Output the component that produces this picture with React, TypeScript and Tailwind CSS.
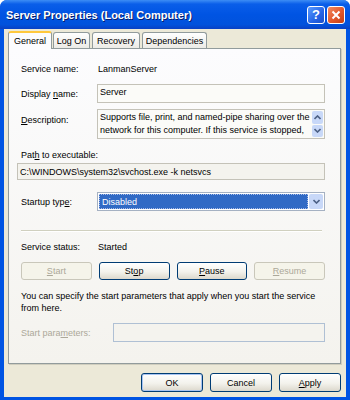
import type { ReactNode } from "react";

const U = ({ children }: { children: ReactNode }) => (
  <span className="underline underline-offset-[1px]">{children}</span>
);

function XPButton({
  children,
  disabled,
  className = "",
}: {
  children: ReactNode;
  disabled?: boolean;
  className?: string;
}) {
  return (
    <div
      className={`flex h-[18px] items-center justify-center rounded-[3px] border ${
        disabled
          ? "border-[#C9C7BA] bg-[#F5F4EA] text-[#ACA899]"
          : "border-[#003C74] bg-[linear-gradient(to_bottom,#FFFFFF,#F3F2EC_55%,#DCD8CC)] text-black"
      } ${className}`}
    >
      {children}
    </div>
  );
}

function Chevron({ up }: { up?: boolean }) {
  return (
    <svg width="7" height="5" viewBox="0 0 7 5">
      <path
        d={up ? "M0.5 4 L3.5 1 L6.5 4" : "M0.5 1 L3.5 4 L6.5 1"}
        fill="none"
        stroke="#4D6185"
        strokeWidth="1.6"
      />
    </svg>
  );
}

export default function App() {
  return (
    <div className="flex h-[400px] w-[350px] flex-col rounded-t-[7px] bg-[#0054E3] font-['Liberation_Sans',Arial,sans-serif] text-[9px] leading-[12px] text-black">
      {/* Title bar */}
      <div className="flex h-[29px] items-center rounded-t-[7px] bg-[linear-gradient(180deg,#3D8DF5_0%,#0A5EE9_14%,#0054E3_50%,#0152DC_85%,#0940C4_100%)] pl-[6px] pr-[5px]">
        <span className="flex-1 text-[11px] font-bold text-white [text-shadow:1px_1px_0_#0A1E6A]">
          Server Properties (Local Computer)
        </span>
        <div className="mr-[2px] flex h-[18px] w-[18px] items-center justify-center rounded-[3px] border border-white bg-[linear-gradient(135deg,#5A9BFF,#2463E6_60%,#1A4FC8)] text-[13px] font-bold text-white">
          ?
        </div>
        <div className="flex h-[18px] w-[18px] items-center justify-center rounded-[3px] border border-white bg-[linear-gradient(135deg,#F28C62,#E2572B_55%,#C23E14)]">
          <svg width="10" height="10" viewBox="0 0 10 10">
            <path d="M1.5 1.5 L8.5 8.5 M8.5 1.5 L1.5 8.5" stroke="white" strokeWidth="2" />
          </svg>
        </div>
      </div>

      {/* Body */}
      <div className="mb-[3px] ml-[4px] mr-[4px] flex flex-1 flex-col bg-[#ECE9D8] pl-[4px] pr-[5px]">
        {/* Tabs */}
        <div className="flex h-[19px] items-end">
          <div className="relative z-10 -mb-px flex h-[18px] w-[44px] items-start justify-center rounded-t-[3px] border-x border-t-[2px] border-x-[#919B9C] border-t-[#FFC83C] bg-[#FCFCFE] pt-[2px]">
            General
          </div>
          <div className="ml-[1px] flex h-[16px] w-[37px] items-center justify-center rounded-t-[3px] border-x border-t border-[#919B9C] bg-[linear-gradient(to_bottom,#FFFFFF,#ECEBE6)]">
            Log On
          </div>
          <div className="ml-[2px] flex h-[16px] w-[48px] items-center justify-center rounded-t-[3px] border-x border-t border-[#919B9C] bg-[linear-gradient(to_bottom,#FFFFFF,#ECEBE6)]">
            Recovery
          </div>
          <div className="ml-[2px] flex h-[16px] w-[65px] items-center justify-center rounded-t-[3px] border-x border-t border-[#919B9C] bg-[linear-gradient(to_bottom,#FFFFFF,#ECEBE6)]">
            Dependencies
          </div>
        </div>

        {/* Panel */}
        <div className="flex h-[316px] flex-col border border-[#919B9C] bg-[linear-gradient(to_bottom,#FCFCFE,#F4F3EE)] pl-[12px] pr-[15px] shadow-[1px_1px_0_#D0CEBF]">
          <div className="mt-[13px] flex h-[13px] items-center">
            <span className="w-[77px]">Service name:</span>
            <span>LanmanServer</span>
          </div>

          <div className="mt-[9px] flex items-center">
            <span className="w-[76px]">
              Display <U>n</U>ame:
            </span>
            <div className="h-[19px] flex-1 border border-[#C4C2B8] bg-[#FBFBF8] px-[2px] pt-[1px]">
              Server
            </div>
          </div>

          <div className="mt-[6px] flex items-start">
            <span className="w-[76px] pt-[5px]">
              <U>D</U>escription:
            </span>
            <div className="flex h-[30px] flex-1 border border-[#C4C2B8] bg-[#FBFBF8]">
              <div className="flex-1 overflow-hidden pl-[2px] pt-[1px] leading-[13px]">
                Supports file, print, and named-pipe sharing over the network for this computer. If this service is stopped,
              </div>
              <div className="flex w-[13px] flex-col gap-[1px] p-px">
                <div className="flex flex-1 items-center justify-center rounded-[2px] bg-[#C8D8F8]">
                  <Chevron up />
                </div>
                <div className="flex flex-1 items-center justify-center rounded-[2px] bg-[#C8D8F8]">
                  <Chevron />
                </div>
              </div>
            </div>
          </div>

          <div className="mt-[10px] h-[13px]">
            Pat<U>h</U> to executable:
          </div>
          <div className="-ml-[4px] mt-[1px] flex h-[17px] items-center border border-[#C4C2B8] bg-[#F4F3EE] px-[2px]">
            C:\WINDOWS\system32\svchost.exe -k netsvcs
          </div>

          <div className="mt-[12px] flex items-center">
            <span className="w-[76px]">
              Startup typ<U>e</U>:
            </span>
            <div className="flex h-[19px] flex-1 items-center border border-[#A5B1C2] bg-white p-px">
              <div className="flex h-full flex-1 items-center border border-dotted border-[#A8BCE8] bg-[#316AC5] pl-[2px] text-white">
                Disabled
              </div>
              <div className="ml-px flex h-full w-[14px] items-center justify-center rounded-[2px] bg-[#C8D8F8]">
                <Chevron />
              </div>
            </div>
          </div>

          <div className="mt-[19px] mr-[3px] border-t border-b border-t-[#D0D0BF] border-b-white" />

          <div className="mt-[8px] flex h-[13px] items-center">
            <span className="w-[77px]">Service status:</span>
            <span>Started</span>
          </div>

          <div className="mt-[9px] grid grid-cols-4 gap-[7px]">
            <XPButton disabled>
              <U>S</U>tart
            </XPButton>
            <XPButton>
              St<U>o</U>p
            </XPButton>
            <XPButton>
              <U>P</U>ause
            </XPButton>
            <XPButton disabled>
              <U>R</U>esume
            </XPButton>
          </div>

          <p className="mt-[10px] leading-[12px]">
            You can specify the start parameters that apply when you start the service from here.
          </p>

          <div className="mt-[9px] flex items-center">
            <span className="w-[92px] text-[#ACA899]">
              Start para<U>m</U>eters:
            </span>
            <div className="h-[19px] flex-1 border border-[#AFC0D4] bg-[#F4F3EE]" />
          </div>
        </div>

        {/* Bottom buttons */}
        <div className="mt-[9px] flex justify-end gap-[7px]">
          <XPButton className="h-[19px] w-[62px] shadow-[inset_0_0_0_1px_#A8C4F2]">OK</XPButton>
          <XPButton className="h-[19px] w-[62px]">Cancel</XPButton>
          <XPButton className="h-[19px] w-[62px]">
            <U>A</U>pply
          </XPButton>
        </div>
      </div>
    </div>
  );
}
